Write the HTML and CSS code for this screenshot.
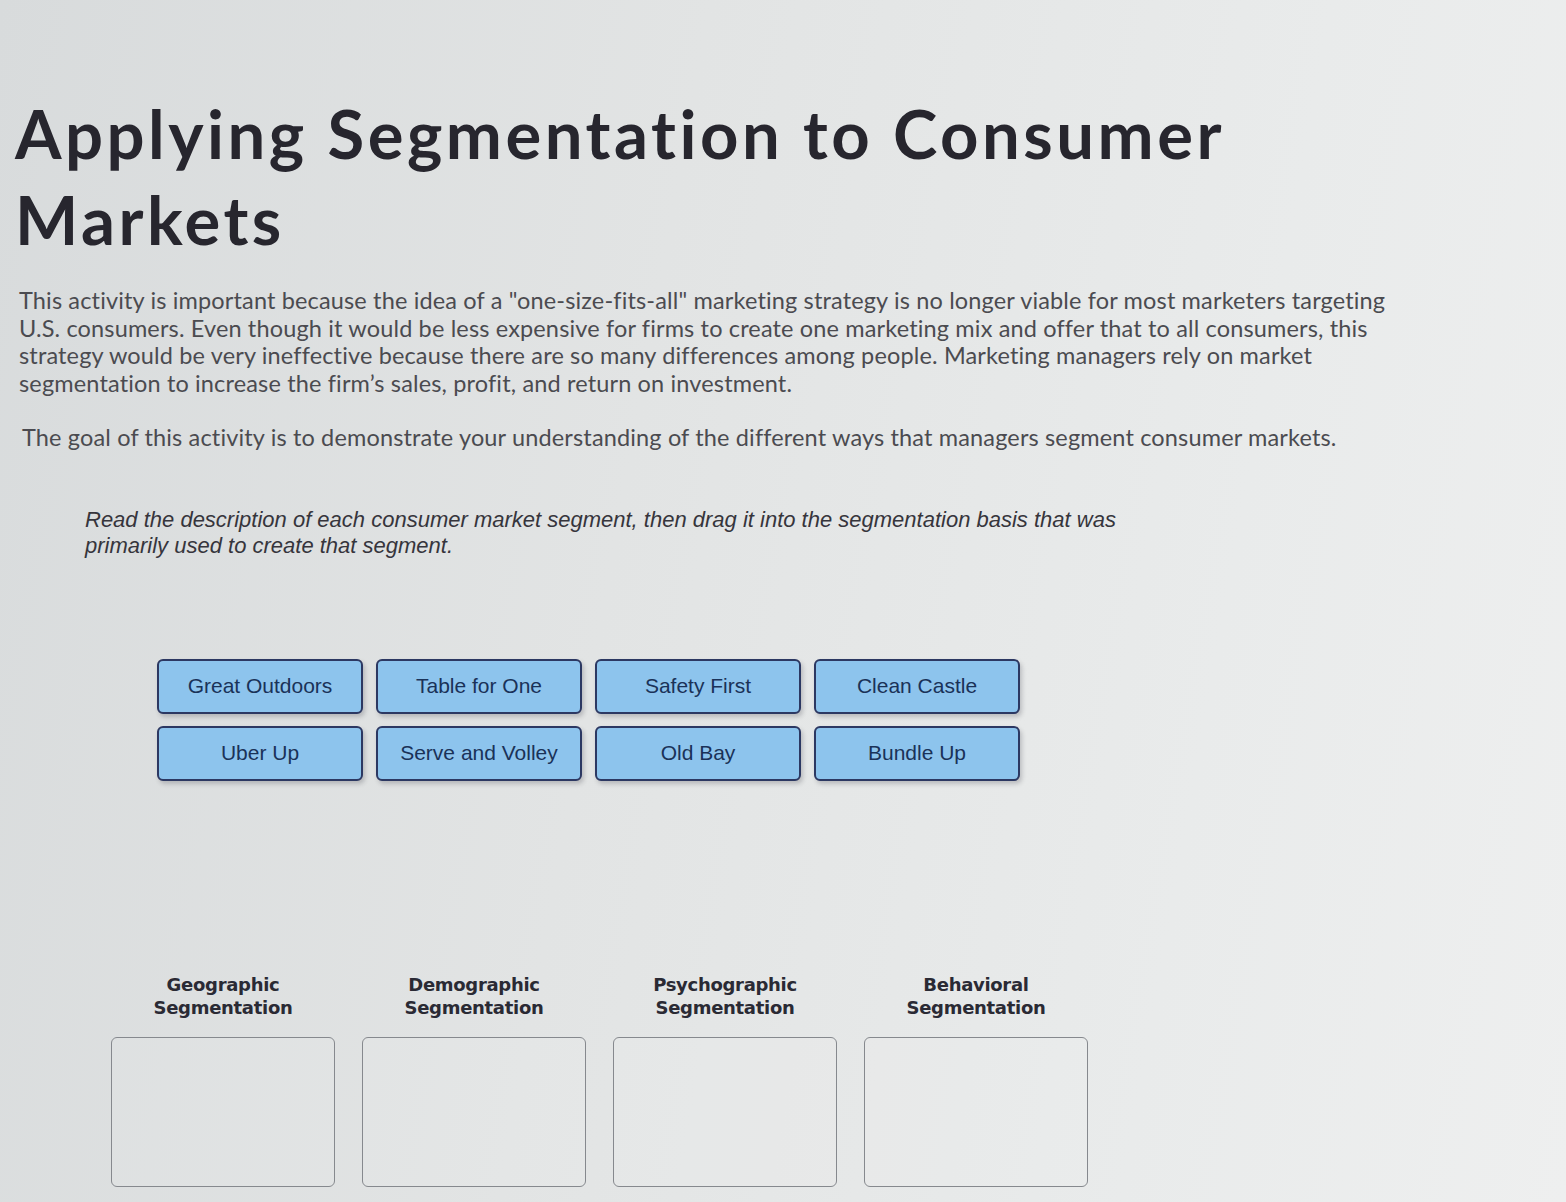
FILE: index.html
```html
<!DOCTYPE html>
<html lang="en">
<head>
<meta charset="utf-8">
<title>Applying Segmentation to Consumer Markets</title>
<link rel="stylesheet" href="styles.css">
</head>
<body>
<main class="page">
  <h1 class="title">Applying Segmentation to Consumer Markets</h1>
  <p class="intro">This activity is important because the idea of a "one-size-fits-all" marketing strategy is no longer viable for most marketers targeting U.S. consumers. Even though it would be less expensive for firms to create one marketing mix and offer that to all consumers, this strategy would be very ineffective because there are so many differences among people. Marketing managers rely on market segmentation to increase the firm’s sales, profit, and return on investment.</p>
  <p class="goal">The goal of this activity is to demonstrate your understanding of the different ways that managers segment consumer markets.</p>

  <p class="instruction">Read the description of each consumer market segment, then drag it into the segmentation basis that was primarily used to create that segment.</p>

  <div class="chips">
    <div class="chip">Great Outdoors</div>
    <div class="chip">Table for One</div>
    <div class="chip">Safety First</div>
    <div class="chip">Clean Castle</div>
    <div class="chip">Uber Up</div>
    <div class="chip">Serve and Volley</div>
    <div class="chip">Old Bay</div>
    <div class="chip">Bundle Up</div>
  </div>

  <div class="targets">
    <div class="target">
      <div class="target-label">Geographic<br>Segmentation</div>
      <div class="drop"></div>
    </div>
    <div class="target">
      <div class="target-label">Demographic<br>Segmentation</div>
      <div class="drop"></div>
    </div>
    <div class="target">
      <div class="target-label">Psychographic<br>Segmentation</div>
      <div class="drop"></div>
    </div>
    <div class="target">
      <div class="target-label">Behavioral<br>Segmentation</div>
      <div class="drop"></div>
    </div>
  </div>
</main>
</body>
</html>
```

FILE: styles.css
```css
html, body {
  margin: 0;
  padding: 0;
}

body {
  min-height: 1202px;
  background: linear-gradient(100deg, #d8dbdc 0%, #e2e4e4 40%, #e9ebeb 75%, #eeefef 100%);
  font-family: "Lato", "Liberation Sans", sans-serif;
}

.page {
  padding: 90px 0 0 15px;
}

.title {
  margin: 0;
  width: 1300px;
  font-family: "Lato", sans-serif;
  font-weight: 700;
  font-size: 67px;
  line-height: 86px;
  color: #27262e;
  letter-spacing: 3.5px;
}

.intro,
.goal {
  margin: 0;
  padding-left: 4px;
  width: 1380px;
  font-family: "Lato", sans-serif;
  font-size: 23.5px;
  line-height: 27.7px;
  letter-spacing: 0.15px;
  color: #4b4b50;
}

.intro {
  margin-top: 25px;
}

.goal {
  margin-top: 26px;
  padding-left: 7px;
}

.instruction {
  margin: 55px 0 0 70px;
  width: 1040px;
  font-family: "Liberation Sans", Arial, sans-serif;
  font-style: italic;
  font-size: 22px;
  line-height: 26px;
  color: #36353c;
}

.chips {
  margin: 100px 0 0 142px;
  display: grid;
  grid-template-columns: repeat(4, 206px);
  column-gap: 13px;
  row-gap: 12px;
}

.chip {
  height: 55px;
  box-sizing: border-box;
  display: flex;
  align-items: center;
  justify-content: center;
  background: #8dc4ed;
  border: 2px solid #2c3862;
  border-radius: 6px;
  box-shadow: 2px 3px 4px rgba(60, 60, 70, 0.25);
  font-family: "Liberation Sans", Arial, sans-serif;
  font-size: 21px;
  color: #1a3258;
}

.targets {
  margin: 192px 0 0 96px;
  display: grid;
  grid-template-columns: repeat(4, 224px);
  column-gap: 27px;
}

.target {
  display: flex;
  flex-direction: column;
  align-items: center;
}

.target-label {
  height: 46px;
  text-align: center;
  font-family: "DejaVu Sans", Verdana, sans-serif;
  font-weight: 700;
  font-size: 18px;
  line-height: 23px;
  color: #2a2a34;
  letter-spacing: -0.3px;
}

.drop {
  margin-top: 18px;
  width: 224px;
  height: 150px;
  box-sizing: border-box;
  border: 1.5px solid #86898e;
  border-radius: 6px;
  background: rgba(255, 255, 255, 0.08);
}
```
